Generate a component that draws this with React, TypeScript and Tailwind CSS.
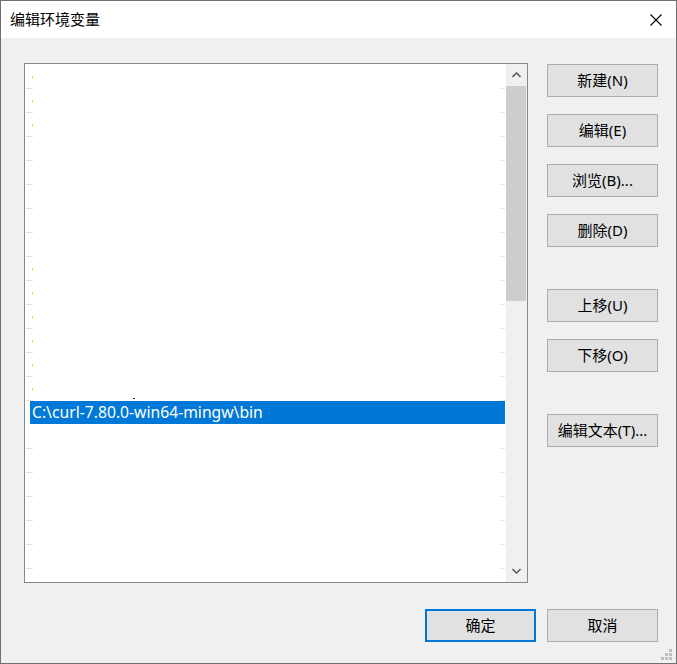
const rows = Array.from({ length: 22 }, (_, i) => i);
const marked = [0, 1, 2, 8, 9, 10, 11, 12, 13];
const SELECTED = 14;

function SideButton({ label, className = "" }: { label: string; className?: string }) {
  return (
    <button
      className={
        "w-[111px] h-[33px] shrink-0 border border-[#adadad] bg-[#e1e1e1] text-[15px] text-black leading-none flex items-center justify-center " +
        className
      }
    >
      {label}
    </button>
  );
}

function Chevron({ up }: { up: boolean }) {
  return (
    <svg width="9" height="6" viewBox="0 0 9 6">
      <polyline
        points={up ? "0.5,5 4.5,1 8.5,5" : "0.5,1 4.5,5 8.5,1"}
        fill="none"
        stroke="#606060"
        strokeWidth="1.6"
      />
    </svg>
  );
}

export default function App() {
  return (
    <div className="relative w-[677px] h-[664px] border border-[#707070] bg-[#f0f0f0] flex flex-col font-['Noto_Sans','Noto_Sans_CJK_SC',sans-serif] text-black overflow-hidden">
      {/* Title bar */}
      <div className="h-[37px] shrink-0 bg-white flex items-center justify-between pl-[9px] pr-[14px]">
        <span className="text-[15px] leading-none">编辑环境变量</span>
        <svg width="12" height="12" viewBox="0 0 12 12">
          <path d="M0.5 0.5 L11.5 11.5 M11.5 0.5 L0.5 11.5" stroke="#000" strokeWidth="1.1" />
        </svg>
      </div>

      {/* Body */}
      <div className="flex-1 flex flex-col pl-[23px] pr-[18px] pt-[25px]">
        <div className="flex gap-[19px]">
          {/* List box */}
          <div className="w-[504px] h-[520px] border border-[#828790] bg-white flex overflow-hidden">
            <div className="flex-1 flex flex-col overflow-hidden">
              {rows.map((i) => (
                <div key={i} className="relative h-[24px] shrink-0">
                  {i > 0 && i !== SELECTED + 1 && (
                    <>
                      <span className="absolute left-[1px] top-0 w-[7px] h-px bg-[#e3e3e3]" />
                      <span className="absolute left-[476px] top-0 w-[4px] h-px bg-[#e3e3e3]" />
                    </>
                  )}
                  {marked.includes(i) && (
                    <span className="absolute left-[7px] top-[12px] w-px h-[3px] bg-[#f7d25c]" />
                  )}
                  {i === SELECTED - 1 && (
                    <span className="absolute left-[108px] top-[22px] w-[2px] h-px bg-[#1a2a4a]" />
                  )}
                  {i === SELECTED && (
                    <div className="ml-[5px] mr-px mt-px h-[23px] bg-[#0078d7] text-white text-[15.7px] leading-none flex items-center pl-[2px] pt-px">
                      C:\curl-7.80.0-win64-mingw\bin
                    </div>
                  )}
                </div>
              ))}
            </div>
            {/* Scrollbar */}
            <div className="w-[21px] shrink-0 bg-[#f0f0f0] flex flex-col">
              <div className="h-[22px] flex items-center justify-center">
                <Chevron up />
              </div>
              <div className="h-[215px] mr-px bg-[#cdcdcd]" />
              <div className="flex-1" />
              <div className="h-[22px] flex items-center justify-center">
                <Chevron up={false} />
              </div>
            </div>
          </div>

          {/* Side buttons */}
          <div className="flex flex-col pt-px gap-[17px]">
            <SideButton label="新建(N)" />
            <SideButton label="编辑(E)" />
            <SideButton label="浏览(B)..." />
            <SideButton label="删除(D)" />
            <SideButton label="上移(U)" className="mt-[25px]" />
            <SideButton label="下移(O)" />
            <SideButton label="编辑文本(T)..." className="mt-[25px]" />
          </div>
        </div>

        {/* Footer */}
        <div className="flex justify-end gap-[11px] mt-[26px]">
          <button className="w-[111px] h-[33px] border-2 border-[#0078d7] bg-[#e1e1e1] text-[15px] leading-none flex items-center justify-center">
            确定
          </button>
          <SideButton label="取消" />
        </div>
      </div>

      {/* Resize grip */}
      <svg className="absolute right-[3px] bottom-[2px]" width="12" height="12" viewBox="0 0 12 12">
        <g fill="#bfbfbf">
          <rect x="8" y="0" width="3" height="3" />
          <rect x="4" y="4" width="3" height="3" />
          <rect x="8" y="4" width="3" height="3" />
          <rect x="0" y="8" width="3" height="3" />
          <rect x="4" y="8" width="3" height="3" />
          <rect x="8" y="8" width="3" height="3" />
        </g>
      </svg>
    </div>
  );
}
